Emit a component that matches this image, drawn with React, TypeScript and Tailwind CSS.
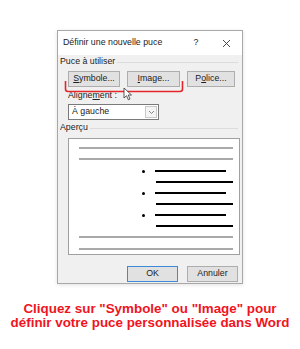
import React from "react";

const ui = { fontFamily: '"Liberation Sans", Arial, sans-serif' };

function Btn({ children, w, primary }: { children: React.ReactNode; w: string; primary?: boolean }) {
  return (
    <div
      className={`${w} h-[16px] flex items-center justify-center bg-[#e1e1e1] border ${primary ? "border-[#3c8ad8]" : "border-[#adadad]"} text-[8.8px] text-[#222]`}
    >
      {children}
    </div>
  );
}

export default function App() {
  return (
    <div className="w-[300px] h-[349px] bg-white relative overflow-hidden" style={ui}>
      <div className="pt-[30px] pl-[57px]">
        <div className="w-[186px] h-[254px] border border-[#a8a8a8] bg-[#f0f0f0] flex flex-col shadow-[0_1px_4px_rgba(0,0,0,0.12)] relative">
          {/* title bar */}
          <div className="h-[24px] bg-white flex items-center pl-[5px] pr-[10px] text-[8.8px] text-[#222]">
            <span className="flex-1">Définir une nouvelle puce</span>
            <span className="w-[12px] text-center mr-[20px]">?</span>
            <svg width="9" height="9" viewBox="0 0 9 9" className="mr-[1px]">
              <path d="M1 1L8 8M8 1L1 8" stroke="#333" strokeWidth="0.9" />
            </svg>
          </div>
          {/* body */}
          <div className="flex flex-col pl-[2px] pr-[4px]">
            <div className="flex items-center h-[12px] mt-[1px] text-[8.8px] text-[#222]">
              <span>Puce à utiliser</span>
              <div className="flex-1 h-px bg-[#dcdcdc] ml-[2px]" />
            </div>
            <div className="flex gap-[7px] pl-[8px] mt-[3px]">
              <Btn w="w-[52px]">
                <span><span className="underline">S</span>ymbole...</span>
              </Btn>
              <Btn w="w-[53px]">
                <span><span className="underline">I</span>mage...</span>
              </Btn>
              <Btn w="w-[48px]">
                <span>P<span className="underline">o</span>lice...</span>
              </Btn>
            </div>
            <div className="pl-[8px] mt-[3px] h-[12px] flex items-center text-[8.8px] text-[#222]">
              <span>Aligne<span className="underline">m</span>ent :</span>
            </div>
            <div className="ml-[8px] mt-[2px] w-[91px] h-[16px] bg-white border border-[#7a7a7a] flex items-center text-[8.8px] text-[#222]">
              <span className="flex-1 pl-[3px]">À gauche</span>
              <div className="w-[12px] h-[12px] mr-[1px] border border-[#c8c8c8] bg-[#f4f4f4] flex items-center justify-center">
                <svg width="7" height="5" viewBox="0 0 7 5">
                  <path d="M1 1L3.5 3.5L6 1" stroke="#777" strokeWidth="0.9" fill="none" />
                </svg>
              </div>
            </div>
            <div className="flex items-center h-[12px] mt-[2px] text-[8.8px] text-[#222]">
              <span>Aperçu</span>
              <div className="flex-1 h-px bg-[#dcdcdc] ml-[2px]" />
            </div>
            {/* preview */}
            <div className="ml-[8px] mt-[4px] w-[172px] h-[117px] bg-white border border-[#a0a0a0] flex flex-col pl-[10px] pr-[6px] pt-[8px]">
              <div className="h-[2px] bg-[#a9a9a9]" />
              <div className="h-[2px] bg-[#a9a9a9] mt-[9px]" />
              {[0, 1, 2].map((i) => (
                <div key={i} className={`flex flex-col ${i === 0 ? "mt-[9px]" : "mt-[8px]"}`}>
                  <div className="flex items-center h-[4px]">
                    <div className="w-[63px]" />
                    <div className="w-[3px] h-[3px] rounded-full bg-black" />
                    <div className="w-[10px]" />
                    <div className="w-[71px] h-[2px] bg-black" />
                  </div>
                  <div className="flex mt-[8px] pl-[77px]">
                    <div className="flex-1 h-[2px] bg-black" />
                  </div>
                </div>
              ))}
              <div className="h-[2px] bg-[#a9a9a9] mt-[9px]" />
              <div className="h-[2px] bg-[#a9a9a9] mt-[10px]" />
            </div>
            <div className="flex justify-end gap-[9px] mt-[11px] pr-[0px]">
              <Btn w="w-[51px]" primary>OK</Btn>
              <Btn w="w-[51px]">Annuler</Btn>
            </div>
          </div>
          {/* red annotation bracket */}
          <svg className="absolute left-[6px] top-[49px]" width="120" height="14" viewBox="0 0 120 14">
            <path d="M1.5 1V9Q1.5 11.5 4 11.5H116Q118.5 11.5 118.5 9V1" stroke="#e5262b" strokeWidth="1.6" fill="none" />
          </svg>
          {/* cursor */}
          <svg className="absolute left-[65px] top-[56px]" width="10" height="14" viewBox="0 0 10 14">
            <path d="M1 1V11L3.5 8.7L5.4 12.8L7 12L5.2 8H8.5Z" fill="white" stroke="#333" strokeWidth="0.8" strokeLinejoin="round" />
          </svg>
        </div>
      </div>
      <div
        className="mt-[18px] text-center font-bold text-[13.4px] leading-[14px] text-[#f0141e]"
        style={{ fontFamily: '"Liberation Sans", Arial, sans-serif' }}
      >
        <div>Cliquez sur "Symbole" ou "Image" pour</div>
        <div>définir votre puce personnalisée dans Word</div>
      </div>
    </div>
  );
}
